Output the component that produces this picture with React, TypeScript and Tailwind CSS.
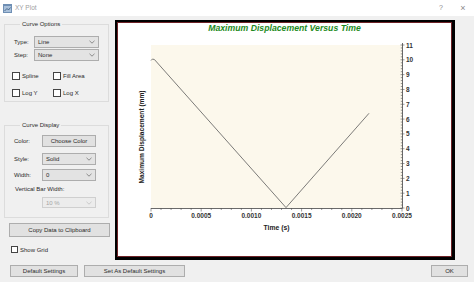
import React from "react";

// small chevron used by the combo boxes
const Chevron = ({ color = "#666" }: { color?: string }) => (
  <svg width="6" height="4" viewBox="0 0 6 4" className="shrink-0">
    <path d="M0.5 0.8 L3 3.2 L5.5 0.8" fill="none" stroke={color} strokeWidth="0.7" />
  </svg>
);

function Combo({ value, className = "", disabled = false }: { value: string; className?: string; disabled?: boolean }) {
  return (
    <div
      className={
        "flex items-center justify-between border pl-[3px] pr-[3px] " +
        (disabled ? "border-[#cfcfcf] bg-[#ececec] text-[#a5a5a5] " : "border-[#adadad] bg-[#e3e3e3] ") +
        className
      }
    >
      <span className="leading-none">{value}</span>
      <Chevron color={disabled ? "#bbb" : "#666"} />
    </div>
  );
}

function Button({ label, className = "" }: { label: string; className?: string }) {
  return (
    <div className={"flex items-center justify-center border border-[#adadad] bg-[#e1e1e1] leading-none " + className}>
      {label}
    </div>
  );
}

function Check({ label, className = "" }: { label: string; className?: string }) {
  return (
    <div className={"flex items-center gap-[2px] " + className}>
      <div className="h-[8px] w-[8px] border border-[#444] bg-white" />
      <span className="leading-none">{label}</span>
    </div>
  );
}

function TitleBar() {
  return (
    <div className="flex h-[16px] items-center bg-white pl-[3px]">
      <svg width="9" height="9" viewBox="0 0 9 9">
        <rect x="0" y="0" width="9" height="9" fill="#6f8fb4" />
        <rect x="1" y="2" width="7" height="6" fill="#a9c0da" />
        <path d="M1.5 7 L4 4.5 L5.5 6 L7.5 3.5" fill="none" stroke="#34557c" strokeWidth="0.8" />
      </svg>
      <span className="ml-[3px] text-[6.5px] text-[#a0a0a0]">XY Plot</span>
      <div className="ml-auto flex items-center text-[#8a8a8a]">
        <span className="w-[22px] text-center text-[7px]">?</span>
        <span className="w-[22px] text-center text-[9px] leading-none">×</span>
      </div>
    </div>
  );
}

function LeftPanel() {
  return (
    <div className="flex w-[115px] shrink-0 flex-col pl-[4px]">
      <fieldset className="h-[82px] w-[105px] border border-[#dcdcdc] pl-[9px] pr-[9px]">
        <legend className="ml-[6px] px-[2px] leading-[8px]">Curve Options</legend>
        <div className="mt-[8px] flex flex-col gap-[1px]">
          <div className="flex items-center">
            <span className="w-[20px]">Type:</span>
            <Combo value="Line" className="h-[12px] w-[65px]" />
          </div>
          <div className="flex items-center">
            <span className="w-[20px]">Step:</span>
            <Combo value="None" className="h-[12px] w-[65px]" />
          </div>
        </div>
        <div className="-ml-[2px] mt-[11px] flex">
          <Check label="Spline" className="w-[41px]" />
          <Check label="Fill Area" />
        </div>
        <div className="-ml-[2px] mt-[9px] flex">
          <Check label="Log Y" className="w-[41px]" />
          <Check label="Log X" />
        </div>
      </fieldset>

      <fieldset className="mt-[19px] h-[97px] w-[105px] border border-[#dcdcdc] pl-[9px]">
        <legend className="ml-[6px] px-[2px] leading-[8px]">Curve Display</legend>
        <div className="mt-[6px] flex items-center">
          <span className="w-[28px]">Color:</span>
          <Button label="Choose Color" className="h-[12px] w-[54px]" />
        </div>
        <div className="mt-[6px] flex items-center">
          <span className="w-[28px]">Style:</span>
          <Combo value="Solid" className="h-[12px] w-[54px]" />
        </div>
        <div className="mt-[4px] flex items-center">
          <span className="w-[28px]">Width:</span>
          <Combo value="0" className="h-[12px] w-[54px]" />
        </div>
        <div className="ml-[1px] mt-[4px] leading-[8px]">Vertical Bar Width:</div>
        <div className="mt-[4px] pl-[28px]">
          <Combo value="10 %" disabled className="h-[11px] w-[54px]" />
        </div>
      </fieldset>

      <Button label="Copy Data to Clipboard" className="ml-[5px] mt-[5px] h-[14px] w-[101px]" />
      <div className="ml-[7px] mt-[9px] flex items-center gap-[2px]">
        <div className="h-[7px] w-[7px] border border-[#444] bg-white" />
        <span className="leading-none">Show Grid</span>
      </div>
    </div>
  );
}

const X0 = 151;
const X1 = 402;
const Y0 = 208;
const Y1 = 45;
const yStep = (Y0 - Y1) / 11;
const xStep = (X1 - X0) / 25; // one minor tick = 0.0001 s

function Plot() {
  const xLabels = ["0", "0.0005", "0.0010", "0.0015", "0.0020", "0.0025"];
  return (
    <div className="h-[240px] w-[340px] shrink-0 border-b-[3px] border-l-2 border-r-[3px] border-t-2 border-black">
      <div className="h-full w-full border border-[#6e2226] bg-white">
        <svg width="333" height="233" viewBox="118 23 333 233" className="block">
          <text
            x="284.5"
            y="31"
            textAnchor="middle"
            fontFamily="'Liberation Sans', Arial, sans-serif"
            fontWeight="bold"
            fontStyle="italic"
            fontSize="8.7"
            fill="#1d8a22"
          >
            Maximum Displacement Versus Time
          </text>

          <rect x={X0} y={Y1} width={X1 - X0} height={Y0 - Y1} fill="#fcf8ec" />

          {/* y axis on the right */}
          <line x1={X1 + 0.5} y1={Y1 - 2} x2={X1 + 0.5} y2={Y0} stroke="#444" strokeWidth="0.8" />
          {Array.from({ length: 56 }, (_, i) => {
            const y = Y0 - (i * yStep) / 5;
            const major = i % 5 === 0;
            return (
              <line
                key={"yt" + i}
                x1={major ? X1 - 1.5 : X1 - 1.2}
                y1={y}
                x2={major ? X1 + 2.5 : X1 + 0.5}
                y2={y}
                stroke="#555"
                strokeWidth="0.6"
              />
            );
          })}
          {Array.from({ length: 12 }, (_, i) => (
            <text
              key={"yl" + i}
              x={X1 + 4}
              y={Y0 - i * yStep + 2.5}
              fontFamily="'Liberation Sans', Arial, sans-serif"
              fontWeight="bold"
              fontSize="6.5"
              fill="#333"
            >
              {i}
            </text>
          ))}

          {/* x axis */}
          <line x1={X0} y1={Y0 + 0.5} x2={X1 + 0.5} y2={Y0 + 0.5} stroke="#444" strokeWidth="0.8" />
          {Array.from({ length: 26 }, (_, i) => {
            const x = X0 + i * xStep;
            const major = i % 5 === 0;
            return (
              <line key={"xt" + i} x1={x} y1={Y0} x2={x} y2={Y0 + (major ? 3.5 : 2)} stroke="#555" strokeWidth="0.6" />
            );
          })}
          {xLabels.map((l, i) => (
            <text
              key={"xl" + i}
              x={X0 + i * 5 * xStep}
              y={Y0 + 10}
              textAnchor="middle"
              fontFamily="'Liberation Sans', Arial, sans-serif"
              fontWeight="bold"
              fontSize="6.5"
              fill="#333"
            >
              {l}
            </text>
          ))}

          <text
            x={(X0 + X1) / 2}
            y="230"
            textAnchor="middle"
            fontFamily="'Liberation Sans', Arial, sans-serif"
            fontWeight="bold"
            fontSize="6.8"
            fill="#222"
          >
            Time (s)
          </text>
          <text
            x="0"
            y="0"
            transform="translate(144 137) rotate(-90)"
            textAnchor="middle"
            fontFamily="'Liberation Sans', Arial, sans-serif"
            fontWeight="bold"
            fontSize="6.6"
            fill="#222"
          >
            Maximum Displacement (mm)
          </text>

          {/* data */}
          <polyline
            points="151,60.5 152.5,59 154.5,59.6 286,207.6 369,113.3"
            fill="none"
            stroke="#5a5a5a"
            strokeWidth="0.8"
          />
        </svg>
      </div>
    </div>
  );
}

export default function App() {
  return (
    <div className="flex h-[282px] w-[474px] flex-col overflow-hidden bg-[#f0f0f0] font-['Liberation_Sans',Arial,sans-serif] text-[6px] text-[#2a2a2a]">
      <TitleBar />
      <div className="flex pt-[4px]">
        <LeftPanel />
        <Plot />
      </div>
      <div className="mt-[5px] flex items-center pl-[10px] pr-[6px]">
        <Button label="Default Settings" className="h-[12px] w-[68px]" />
        <Button label="Set As Default Settings" className="ml-[6px] h-[12px] w-[101px]" />
        <Button label="OK" className="ml-auto h-[12px] w-[37px]" />
      </div>
    </div>
  );
}
